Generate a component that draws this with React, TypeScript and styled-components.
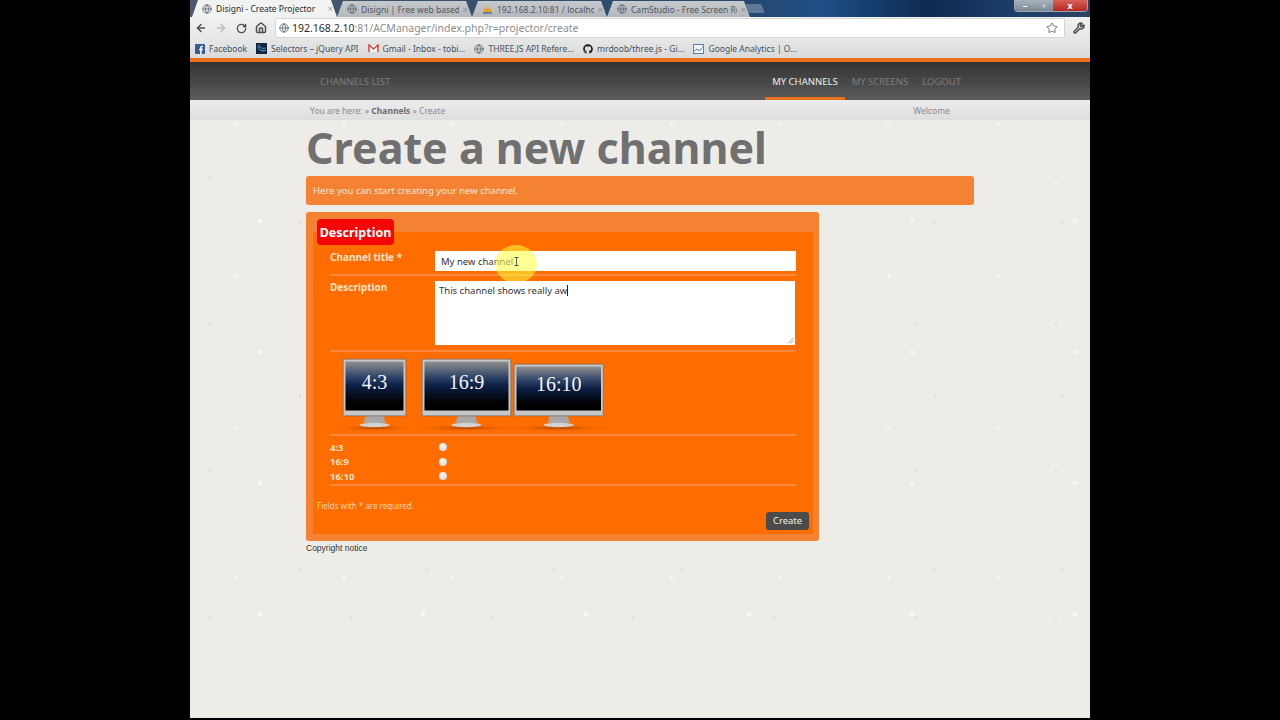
import React from 'react';
import styled, { createGlobalStyle } from 'styled-components';
import { ArrowLeft, ArrowRight, Globe, Home, RotateCw, Star, Wrench } from 'lucide-react';
import { FaGithub } from 'react-icons/fa';

const GlobalStyle = createGlobalStyle`
  html, body {
    margin: 0;
    padding: 0;
    background: #000;
    overflow: hidden;
  }
  * { box-sizing: border-box; }
`;

const Screen = styled.div`
  width: 900px;
  height: 718px;
  margin: 0 auto;
  display: flex;
  flex-direction: column;
  overflow: hidden;
  font-family: 'Noto Sans', 'Open Sans', sans-serif;
  background-color: #eeece8;
  background-image:
    radial-gradient(circle at 20px 30px, #e2e0da 1px, transparent 2px),
    radial-gradient(circle at 70px 90px, #f8f7f4 1.5px, transparent 3px),
    radial-gradient(circle at 110px 50px, #e4e2dc 1px, transparent 2px),
    radial-gradient(circle at 45px 125px, #f7f6f3 1px, transparent 2.5px);
  background-size: 141px 147px, 163px 131px, 127px 173px, 109px 151px;
`;

/* browser chrome */
const TabStrip = styled.div`
  height: 17px;
  display: flex;
  align-items: flex-end;
  background: linear-gradient(90deg, #4a5a6c 0%, #26476e 62%, #1e4f86 70%, #0d2b52 82%, #1d3f6b 92%, #2c4464 100%);
  padding-left: 2px;
`;

const Tab = styled.div<{ $active?: boolean; $width: number }>`
  width: ${(p) => p.$width}px;
  height: ${(p) => (p.$active ? 17 : 16)}px;
  flex-shrink: 0;
  display: flex;
  align-items: center;
  gap: 4px;
  padding: 0 4px 0 10px;
  font-size: 8.5px;
  white-space: nowrap;
  overflow: hidden;
  color: ${(p) => (p.$active ? '#2b2b2b' : '#51565c')};
  background: ${(p) => (p.$active ? '#f1f2f2' : 'linear-gradient(#c6c9cc, #b4b8bc)')};
  clip-path: polygon(6px 0, calc(100% - 6px) 0, 100% 100%, 0 100%);
`;

const TabTitle = styled.span`
  flex: 1;
  overflow: hidden;
`;

const TabClose = styled.span<{ $active?: boolean }>`
  font-size: 9px;
  color: ${(p) => (p.$active ? '#9a9a9a' : '#8c9095')};
`;

const NewTab = styled.div`
  width: 16px;
  height: 9px;
  margin: 0 0 4px -3px;
  background: #5f7899;
  transform: skewX(22deg);
  border-radius: 1px;
`;

const WindowControls = styled.div`
  margin: 0 2px 5px auto;
  height: 12px;
  display: flex;
  border: 1px solid #9aa5b1;
  border-top: 0;
  border-radius: 0 0 4px 4px;
  overflow: hidden;
`;

const WindowButton = styled.div<{ $close?: boolean; $width: number }>`
  width: ${(p) => p.$width}px;
  display: flex;
  align-items: center;
  justify-content: center;
  font-size: 9px;
  font-weight: 700;
  color: #fff;
  background: ${(p) => (p.$close ? 'linear-gradient(#d9625a, #b5281f)' : 'linear-gradient(#a9b3bd, #7d8994)')};
`;

const Toolbar = styled.div`
  height: 22px;
  display: flex;
  align-items: center;
  gap: 8px;
  padding: 0 5px 0 5px;
  background: linear-gradient(#f0f1f1, #e6e7e7);
  color: #4a4a4a;
`;

const NavIcon = styled.span<{ $muted?: boolean }>`
  width: 12px;
  display: flex;
  justify-content: center;
  color: ${(p) => (p.$muted ? '#bdbdbd' : '#4f4f4f')};
`;

const AddressBar = styled.div`
  flex: 1;
  height: 20px;
  display: flex;
  align-items: center;
  gap: 3px;
  margin-left: 0;
  padding: 0 6px 0 3px;
  background: #fff;
  border: 1px solid #d6d6d6;
  border-radius: 3px 0 0 3px;
  font-size: 10.5px;
  color: #8d8d8d;
`;

const UrlHost = styled.span`
  color: #2b2b2b;
`;

const StarSlot = styled.span`
  margin-left: auto;
  display: flex;
  color: #555;
`;

const Bookmarks = styled.div`
  height: 19px;
  display: flex;
  align-items: center;
  gap: 9px;
  padding-left: 5px;
  background: linear-gradient(#e6e7e7, #d9d9d9);
  font-size: 8.5px;
  color: #46505c;
`;

const Bookmark = styled.div`
  display: flex;
  align-items: center;
  gap: 4px;
  white-space: nowrap;
`;

/* site header */
const AccentLine = styled.div`
  height: 4px;
  background: #e8701a;
`;

const NavBar = styled.div`
  height: 38px;
  padding: 0 122px 0 123px;
  display: flex;
  background: linear-gradient(#333, #4f4f4f 70%, #5c5c5c);
  font-size: 9.5px;
`;

const NavItem = styled.div<{ $active?: boolean; $push?: boolean }>`
  display: flex;
  align-items: center;
  height: 100%;
  padding: 0 7px;
  margin-left: ${(p) => (p.$push ? 'auto' : '0')};
  color: ${(p) => (p.$active ? '#eeeeee' : '#7d7d7d')};
  box-shadow: ${(p) => (p.$active ? 'inset 0 -3px 0 #e8701a' : 'none')};
`;

const Crumbs = styled.div`
  height: 20px;
  display: flex;
  align-items: center;
  justify-content: space-between;
  padding: 0 140px 0 120px;
  background: linear-gradient(#ececec, #dedede);
  font-size: 8.5px;
  color: #8a8a8a;
`;

const CrumbStrong = styled.b`
  color: #6d6d6d;
`;

/* page */
const Content = styled.div`
  width: 668px;
  margin-left: 116px;
`;

const Title = styled.h1`
  margin: 0;
  height: 56px;
  font-size: 43px;
  line-height: 56px;
  font-weight: 700;
  color: #707070;
  white-space: nowrap;
`;

const Notice = styled.div`
  height: 29px;
  display: flex;
  align-items: center;
  padding-left: 7px;
  background: #f58232;
  border-radius: 3px;
  font-size: 9.5px;
  color: #fde7d4;
`;

const Panel = styled.div`
  position: relative;
  width: 513px;
  margin-top: 7px;
  padding: 20px 6px 7px 7px;
  background: #f58232;
  border-radius: 3px;
`;

const Legend = styled.div`
  position: absolute;
  top: 7px;
  left: 11px;
  width: 77px;
  height: 26px;
  display: flex;
  align-items: center;
  justify-content: center;
  background: #f40606;
  border-radius: 4px;
  font-size: 12.5px;
  font-weight: 700;
  color: #fff;
  white-space: nowrap;
`;

const Inner = styled.div`
  height: 302px;
  padding: 19px 17px 0 17px;
  background: #ff6c00;
  display: flex;
  flex-direction: column;
`;

const FormRow = styled.div`
  display: grid;
  grid-template-columns: 105px 1fr;
`;

const Label = styled.label`
  font-size: 10px;
  font-weight: 700;
  color: #fde3c4;
  line-height: 12px;
`;

const InputWrap = styled.div`
  position: relative;
`;

const TextInput = styled.div`
  height: 20px;
  display: flex;
  align-items: center;
  padding-left: 6px;
  background: #fff;
  font-size: 9.5px;
  color: #333;
`;

const Highlight = styled.div`
  position: absolute;
  left: 60px;
  top: -6px;
  width: 42px;
  height: 38px;
  border-radius: 50%;
  background: rgba(255, 255, 60, 0.55);
`;

const Caret = styled.svg`
  position: absolute;
  left: 79px;
  top: 6px;
`;

const TextArea = styled.div`
  position: relative;
  width: 359.5px;
  height: 64px;
  padding: 3px 4px;
  background: #fff;
  font-size: 9.5px;
  line-height: 13px;
  color: #333;
`;

const TypingBar = styled.span`
  display: inline-block;
  width: 1px;
  height: 11px;
  vertical-align: -2px;
  background: #222;
`;

const Grip = styled.svg`
  position: absolute;
  right: 1px;
  bottom: 1px;
`;

const Divider = styled.div<{ $above: number; $below: number }>`
  height: 2px;
  margin: ${(p) => p.$above}px 0 ${(p) => p.$below}px;
  background: #f98a3c;
`;

const Monitors = styled.div`
  height: 75px;
  display: flex;
  align-items: flex-start;
  padding-left: 13px;
`;

const MonitorSvg = styled.svg<{ $left: number; $top: number }>`
  flex-shrink: 0;
  overflow: visible;
  margin-left: ${(p) => p.$left}px;
  margin-top: ${(p) => p.$top}px;
`;

const RadioRow = styled.div`
  display: grid;
  grid-template-columns: 109px 1fr;
  align-items: center;
  height: 14.5px;
  font-size: 9.5px;
  font-weight: 700;
  color: #fde3c4;
`;

const RadioDot = styled.span`
  width: 8px;
  height: 8px;
  border-radius: 50%;
  background: radial-gradient(circle at 40% 35%, #f7f7f7, #cfcfcf);
`;

const Required = styled.div`
  margin: 14px 0 0 -13px;
  font-size: 8px;
  line-height: 11px;
  color: #fbd3ae;
`;

const Actions = styled.div`
  display: flex;
  justify-content: flex-end;
  margin: 1px -13px 0 0;
`;

const Button = styled.div`
  width: 43px;
  height: 18px;
  display: flex;
  align-items: center;
  justify-content: center;
  background: #4b4b4b;
  border-radius: 3px;
  font-size: 9.5px;
  color: #f1f1f1;
`;

const Copyright = styled.div`
  margin-top: 1px;
  font-family: 'Liberation Sans', Arial, sans-serif;
  font-size: 8.5px;
  line-height: 12px;
  color: #333;
`;

const Monitor = ({ label, width, height, left, top, size }: { label: string; width: number; height: number; left: number; top: number; size: number }) => {
  const id = `screen-${label.replace(':', '-')}`;
  const total = height + 15;
  const mid = width / 2;
  return (
    <MonitorSvg width={width} height={total} viewBox={`0 0 ${width} ${total}`} $left={left} $top={top}>
      <defs>
        <linearGradient id={id} x1="0" y1="0" x2="0" y2="1">
          <stop offset="0" stopColor="#8f8f8f" />
          <stop offset="0.32" stopColor="#2f4468" />
          <stop offset="0.5" stopColor="#0b1f45" />
          <stop offset="0.85" stopColor="#000" />
        </linearGradient>
        <radialGradient id={`${id}-shadow`}>
          <stop offset="0" stopColor="#7a3000" stopOpacity="0.65" />
          <stop offset="1" stopColor="#ff6c00" stopOpacity="0" />
        </radialGradient>
      </defs>
      <ellipse cx={mid} cy={total - 3} rx={width / 2 + 9} ry="3.5" fill={`url(#${id}-shadow)`} />
      <path d={`M${mid - 9} ${height} h18 l2 7 h-22 z`} fill="#a8a8a8" />
      <ellipse cx={mid} cy={height + 9} rx="15" ry="2.2" fill="#d2d2d2" />
      <rect x="0" y="0" width={width} height={height} fill="#a9a9a9" stroke="#8a6a4a" strokeWidth="0.6" />
      <rect x="1" y="1" width={width - 2} height={height - 2} fill="#c7c7c7" />
      <rect x="2.5" y="2.5" width={width - 5} height={height - 8} fill={`url(#${id})`} />
      <text x={mid} y={height * 0.52} textAnchor="middle" fontFamily="'Liberation Serif', serif" fontSize={size} fill="#f2f4f8">
        {label}
      </text>
    </MonitorSvg>
  );
};

const Favicon = () => <Globe size={10} color="#5d6670" strokeWidth={2} />;

const FacebookIcon = () => (
  <svg width="10" height="10" viewBox="0 0 10 10">
    <rect width="10" height="10" rx="1" fill="#3b5998" />
    <path d="M6.6 10V6.2h1.2l.2-1.5H6.6v-.9c0-.4.2-.7.7-.7H8V1.8C7.7 1.7 7.4 1.7 7 1.7c-1.1 0-1.9.7-1.9 1.9v1.1H4v1.5h1.1V10z" fill="#fff" />
  </svg>
);

const JQueryIcon = () => (
  <svg width="11" height="11" viewBox="0 0 11 11">
    <rect width="11" height="11" fill="#10263f" />
    <path d="M2 3c0 4 4 6 8 4M3 1.5c.5 3 3 4.5 6 3.5" fill="none" stroke="#6fa8dc" strokeWidth="1" />
  </svg>
);

const GmailIcon = () => (
  <svg width="11" height="9" viewBox="0 0 11 9">
    <rect x="0.5" y="0.5" width="10" height="8" fill="#f4f4f4" stroke="#c9c9c9" strokeWidth="0.5" />
    <path d="M1 8V1l4.5 4L10 1v7" fill="none" stroke="#d8352a" strokeWidth="1.3" />
  </svg>
);

const AnalyticsIcon = () => (
  <svg width="11" height="10" viewBox="0 0 11 10">
    <rect x="0.5" y="0.5" width="10" height="9" fill="#eef3fa" stroke="#5b7fb0" />
    <path d="M1.5 7l2.5-2 2 2 3.5-3.5" fill="none" stroke="#3c6fa8" strokeWidth="0.9" />
  </svg>
);

const PmaIcon = () => (
  <svg width="11" height="11" viewBox="0 0 11 11">
    <path d="M1 9l2-6 1.500 3 1.500-5 1.500 5 1-2 1.500 5z" fill="#e8a01c" />
    <rect x="1" y="8" width="9" height="2" fill="#6d7f99" />
  </svg>
);

export default function App() {
  return (
    <Screen>
      <GlobalStyle />
      <TabStrip>
        <Tab $active $width={145}>
          <Favicon />
          <TabTitle>Disigni - Create Projector</TabTitle>
          <TabClose $active>×</TabClose>
        </Tab>
        <Tab $width={135}>
          <Favicon />
          <TabTitle>Disigni | Free web based dig</TabTitle>
          <TabClose>×</TabClose>
        </Tab>
        <Tab $width={135}>
          <PmaIcon />
          <TabTitle>192.168.2.10:81 / localhost</TabTitle>
          <TabClose>×</TabClose>
        </Tab>
        <Tab $width={143}>
          <Favicon />
          <TabTitle>CamStudio - Free Screen Re</TabTitle>
          <TabClose>×</TabClose>
        </Tab>
        <NewTab />
        <WindowControls>
          <WindowButton $width={20}>–</WindowButton>
          <WindowButton $width={18}>▫</WindowButton>
          <WindowButton $close $width={34}>x</WindowButton>
        </WindowControls>
      </TabStrip>

      <Toolbar>
        <NavIcon><ArrowLeft size={12} strokeWidth={3} /></NavIcon>
        <NavIcon $muted><ArrowRight size={12} strokeWidth={3} /></NavIcon>
        <NavIcon><RotateCw size={11} strokeWidth={3} /></NavIcon>
        <NavIcon><Home size={12} strokeWidth={3} /></NavIcon>
        <AddressBar>
          <Favicon />
          <span><UrlHost>192.168.2.10</UrlHost>:81/ACManager/index.php?r=projector/create</span>
          <StarSlot><Star size={12} strokeWidth={1.6} /></StarSlot>
        </AddressBar>
        <NavIcon><Wrench size={12} strokeWidth={3} /></NavIcon>
      </Toolbar>

      <Bookmarks>
        <Bookmark><FacebookIcon />Facebook</Bookmark>
        <Bookmark><JQueryIcon />Selectors – jQuery API</Bookmark>
        <Bookmark><GmailIcon />Gmail - Inbox - tobi...</Bookmark>
        <Bookmark><Favicon />THREE.JS API Refere...</Bookmark>
        <Bookmark><FaGithub size={10} color="#222" />mrdoob/three.js - Gi...</Bookmark>
        <Bookmark><AnalyticsIcon />Google Analytics | O...</Bookmark>
      </Bookmarks>

      <AccentLine />

      <NavBar>
        <NavItem>CHANNELS LIST</NavItem>
        <NavItem $active $push>MY CHANNELS</NavItem>
        <NavItem>MY SCREENS</NavItem>
        <NavItem>LOGOUT</NavItem>
      </NavBar>

      <Crumbs>
        <span>You are here: » <CrumbStrong>Channels</CrumbStrong> » Create</span>
        <span>Welcome</span>
      </Crumbs>

      <Content>
        <Title>Create a new channel</Title>
        <Notice>Here you can start creating your new channel.</Notice>

        <Panel>
          <Legend>Description</Legend>
          <Inner>
            <FormRow>
              <Label>Channel title *</Label>
              <InputWrap>
                <TextInput>My new channel</TextInput>
                <Highlight />
                <Caret width="5" height="9" viewBox="0 0 5 9">
                  <path d="M0.500 0.500h4M2.500 0.500v8M0.500 8.500h4" stroke="#333" strokeWidth="0.8" fill="none" />
                </Caret>
              </InputWrap>
            </FormRow>
            <Divider $above={3} $below={5} />
            <FormRow>
              <Label>Description</Label>
              <TextArea>
                This channel shows really aw<TypingBar />
                <Grip width="7" height="7" viewBox="0 0 7 7">
                  <path d="M1 6.500L6.500 1M3.500 6.500l3-3" stroke="#888" strokeWidth="0.7" />
                </Grip>
              </TextArea>
            </FormRow>
            <Divider $above={5} $below={7} />
            <Monitors>
              <Monitor label="4:3" width={63} height={57} left={0} top={0} size={20} />
              <Monitor label="16:9" width={89} height={57} left={16} top={0} size={20} />
              <Monitor label="16:10" width={89.500} height={52} left={3} top={5} size={20} />
            </Monitors>
            <Divider $above={0} $below={4} />
            <RadioRow>4:3<RadioDot /></RadioRow>
            <RadioRow>16:9<RadioDot /></RadioRow>
            <RadioRow>16:10<RadioDot /></RadioRow>
            <Divider $above={0} $below={0} />
            <Required>Fields with * are required.</Required>
            <Actions><Button>Create</Button></Actions>
          </Inner>
        </Panel>

        <Copyright>Copyright notice</Copyright>
      </Content>
    </Screen>
  );
}
